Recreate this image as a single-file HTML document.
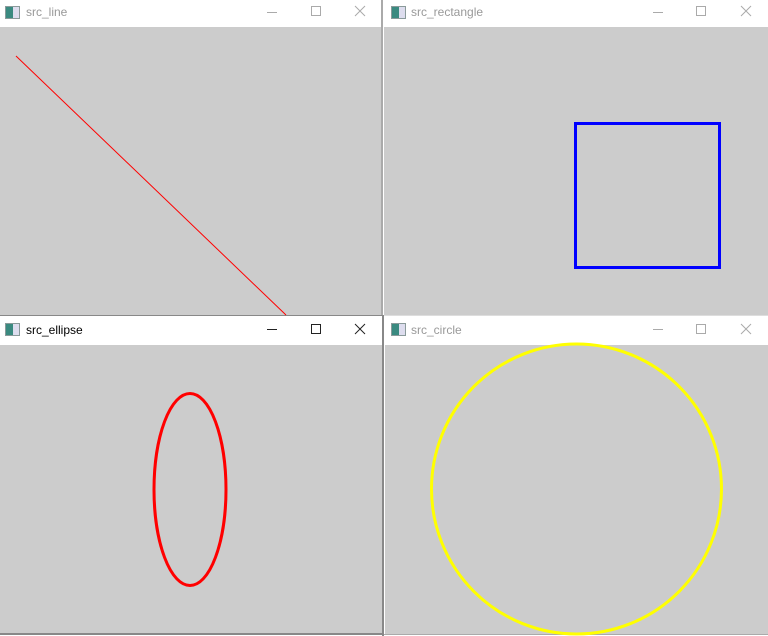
<!DOCTYPE html>
<html><head><style>
body{margin:0;width:768px;height:636px;background:#fff;position:relative;overflow:hidden;font-family:"Liberation Sans","Noto Sans CJK SC",sans-serif}
.t{position:absolute;font-size:12px;color:#999}
.ic{position:absolute;width:13px;height:11px;border:1px solid #8a9a9a;background:linear-gradient(90deg,#3a8a80 0 55%,#dde 55%)}
.g{position:absolute;background:#cccccc}
</style></head><body>
<div class="g" style="left:0;top:27px;width:381px;height:288px"></div>
<div class="g" style="left:384px;top:27px;width:384px;height:288px"></div>
<div style="position:absolute;left:381px;top:0;width:2px;height:316px;background:#aaa"></div>
<div style="position:absolute;left:0;top:315px;width:384px;height:1px;background:#888"></div>
<div class="g" style="left:0;top:345px;width:382px;height:289px"></div>
<div class="g" style="left:385px;top:345px;width:383px;height:289px"></div>
<div style="position:absolute;left:382px;top:316px;width:2px;height:320px;background:#888"></div>
<div style="position:absolute;left:0;top:633px;width:384px;height:2px;background:#888"></div>
<div style="position:absolute;left:384px;top:634px;width:384px;height:1px;background:#aaa"></div>
<div style="position:absolute;left:384px;top:315px;width:384px;height:1px;background:#ddd"></div>
<div class="ic" style="left:5px;top:6px"></div><div class="t" style="left:26px;top:5px">src_line</div>
<div class="ic" style="left:391px;top:6px"></div><div class="t" style="left:411px;top:5px">src_rectangle</div>
<div class="ic" style="left:5px;top:323px"></div><div class="t" style="left:26px;top:323px;color:#000">src_ellipse</div>
<div class="ic" style="left:391px;top:323px"></div><div class="t" style="left:411px;top:323px">src_circle</div>
<svg width="768" height="636" style="position:absolute;left:0;top:0">
<g stroke="#aaa" stroke-width="1" fill="none">
<line x1="267" y1="12.5" x2="277" y2="12.5"/><rect x="311.5" y="6.5" width="9" height="9"/><path d="M355 6l10 10M365 6l-10 10"/>
<line x1="653" y1="12.5" x2="663" y2="12.5"/><rect x="696.5" y="6.5" width="9" height="9"/><path d="M741 6l10 10M751 6l-10 10"/>
<line x1="653" y1="329.5" x2="663" y2="329.5"/><rect x="696.5" y="324.5" width="9" height="9"/><path d="M741 324l10 10M751 324l-10 10"/>
</g>
<g stroke="#222" stroke-width="1" fill="none">
<line x1="267" y1="329.5" x2="277" y2="329.5"/><rect x="311.5" y="324.5" width="9" height="9"/><path d="M355 324l10 10M365 324l-10 10"/>
</g>
<line x1="16" y1="56" x2="286" y2="315" stroke="#f00" stroke-width="1"/>
<rect x="575.5" y="123.5" width="144" height="144" fill="none" stroke="#00f" stroke-width="3"/>
<ellipse cx="190" cy="489.5" rx="36" ry="96" fill="none" stroke="#f00" stroke-width="3"/>
<circle cx="576.5" cy="489" r="145" fill="none" stroke="#ff0" stroke-width="3"/>
</svg>
</body></html>
